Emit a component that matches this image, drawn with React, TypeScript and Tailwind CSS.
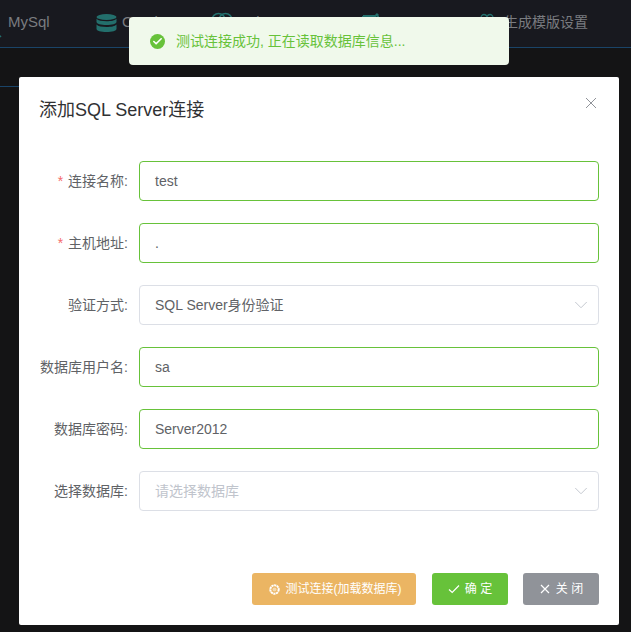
import { Check, ChevronDown } from 'lucide-react'

const FONT = "font-['Liberation_Sans','Noto_Sans_CJK_SC',sans-serif]"

const FIELDS = [
  { label: '连接名称:', value: 'test', required: true, ok: true },
  { label: '主机地址:', value: '.', required: true, ok: true },
  { label: '验证方式:', value: 'SQL Server身份验证', select: true },
  { label: '数据库用户名:', value: 'sa', ok: true },
  { label: '数据库密码:', value: 'Server2012', ok: true },
  { label: '选择数据库:', placeholder: '请选择数据库', select: true },
]

function Field({ label, value, placeholder, required, ok, select }: {
  label: string
  value?: string
  placeholder?: string
  required?: boolean
  ok?: boolean
  select?: boolean
}) {
  return (
    <div className="flex items-center">
      <label className="w-[109px] shrink-0 text-right text-sm text-[#606266]">
        {required && <span className="mr-[5px] text-[#f56c6c]">*</span>}
        {label}
      </label>
      <div
        className={`ml-[11px] flex h-10 w-[460px] items-center justify-between rounded border bg-white pl-[15px] pr-[6px] text-sm ${
          ok ? 'border-[#67c23a]' : 'border-[#dcdfe6]'
        }`}
      >
        <span className={value ? 'text-[#606266]' : 'text-[#c0c4cc]'}>{value ?? placeholder}</span>
        {select && <ChevronDown size={22} strokeWidth={1} className="text-[#c0c4cc]" />}
      </div>
    </div>
  )
}

function DbIcon() {
  return (
    <svg width="21" height="18" viewBox="0 0 21 18" fill="#236f6c" aria-hidden="true">
      <ellipse cx="10.500" cy="3" rx="10" ry="3" />
      <path d="M.5 4.800c1.500 1.800 5.500 2.500 10 2.500s8.500-.7 10-2.500V8c0 1.700-4.500 3-10 3S.5 9.700.5 8z" />
      <path d="M.5 10.500c1.500 1.800 5.500 2.500 10 2.500s8.500-.7 10-2.500V15c0 1.700-4.500 3-10 3S.5 16.700.5 15z" />
    </svg>
  )
}

function SearchIcon() {
  return (
    <svg width="14" height="14" viewBox="0 0 14 14" fill="none" stroke="#236f6c" strokeWidth="1.500" aria-hidden="true">
      <circle cx="6" cy="6" r="4.500" />
      <path d="M9.500 9.500L13 13" />
    </svg>
  )
}

function RingsIcon() {
  return (
    <svg width="22" height="18" viewBox="0 0 22 18" fill="none" stroke="#236f6c" strokeWidth="1.500" aria-hidden="true">
      <circle cx="7.500" cy="8" r="6.500" />
      <circle cx="14.500" cy="8" r="6.500" />
    </svg>
  )
}

function ScreenIcon() {
  return (
    <svg width="18" height="18" viewBox="0 0 18 18" fill="none" stroke="#236f6c" strokeWidth="2" aria-hidden="true">
      <path d="M1 4h13M1 4v11h15V4" />
      <path d="M14 4l2-2" strokeWidth="3" />
    </svg>
  )
}

function HeartIcon() {
  return (
    <svg width="14" height="16" viewBox="0 0 14 16" fill="none" stroke="#236f6c" strokeWidth="1.300" aria-hidden="true">
      <path d="M7 14C3 11 1 8.500 1 5c0-2 1.500-3.500 3-3.500S6.500 2.500 7 3.500C7.500 2.500 8.500 1.500 10 1.500S13 3 13 5c0 3.500-2 6-6 9z" />
    </svg>
  )
}

export default function App() {
  return (
    <div className={`relative h-[632px] overflow-hidden bg-[#141415] ${FONT}`}>
      {/* top nav, mostly covered by the toast and dialog */}
      <div className="flex h-12 items-center border-b border-[#1a4468] bg-[#18191f] pb-[3px] text-[#7a7c80]">
        <span className="-ml-[12px] mt-[18px]"><SearchIcon /></span>
        <span className="ml-[6px] w-[88px] text-[15px]">MySql</span>
        <span className="mt-[2px]"><DbIcon /></span>
        <span className="ml-[5px] w-[89px] text-[15px]">Oracle</span>
        <span className="-mt-[3px]"><RingsIcon /></span>
        <span className="ml-[5px] w-[124px] text-[15px]">SqlServer</span>
        <span className="-mt-[3px]"><ScreenIcon /></span>
        <span className="ml-2 w-[92px] text-[15px]">SSH</span>
        <span className="-mt-[3px]"><HeartIcon /></span>
        <span className="ml-[10px] text-sm">生成模版设置</span>
      </div>
      <div className="h-[39px] w-[19px] border-b border-[#1a4468]" />

      {/* toast */}
      <div className="absolute left-[129px] top-[17px] z-20 flex h-12 w-[380px] items-center rounded bg-[#f0f9eb] pl-[21px] text-sm text-[#67c23a]">
        <span className="flex h-[15px] w-[15px] items-center justify-center rounded-full bg-[#67c23a]">
          <Check size={11} strokeWidth={3.5} className="text-white" />
        </span>
        <span className="ml-[11px]">测试连接成功, 正在读取数据库信息...</span>
      </div>

      {/* dialog */}
      <div className="absolute left-[19px] top-[77px] z-10 flex h-[548px] w-[600px] flex-col rounded-[2px] bg-white">
        <div className="flex items-center justify-between pl-5 pr-[22px] pt-[19px]">
          <h2 className="text-lg leading-[28px] text-[#303133]">添加SQL Server连接</h2>
          <svg width="12" height="12" viewBox="0 0 12 12" fill="none" stroke="#909399" className="mt-[-14px]" aria-hidden="true">
            <path d="M1 1l10 10M11 1L1 11" />
          </svg>
        </div>
        <div className="mt-[37px] flex flex-col gap-[22px]">
          {FIELDS.map((f) => (
            <Field key={f.label} {...f} />
          ))}
        </div>
        <div className="mt-[62px] flex justify-end gap-[16px] pr-5 text-xs text-white">
          <button className="flex h-8 w-[164px] items-center justify-center gap-[6px] rounded-[3px] bg-[#ebb563] pl-[2px]">
            <svg width="11" height="11" viewBox="0 0 11 11" fill="none" stroke="white" aria-hidden="true">
              <circle cx="5.500" cy="5.500" r="4.200" strokeWidth="2" strokeDasharray="2.200 0.500" />
              <circle cx="5.500" cy="5.500" r="2" fill="#f5d9ae" stroke="none" />
            </svg>
            测试连接(加载数据库)
          </button>
          <button className="flex h-8 w-[76px] items-center justify-center gap-[5px] rounded-[3px] bg-[#67c23a]">
            <svg width="12" height="12" viewBox="0 0 12 12" fill="none" stroke="white" strokeWidth="1.200" aria-hidden="true">
              <path d="M1 6.500l3.200 3L11 2.500" />
            </svg>
            确 定
          </button>
          <button className="-ml-[1px] flex h-8 w-[76px] items-center justify-center gap-[5px] rounded-[3px] bg-[#909399]">
            <svg width="12" height="12" viewBox="0 0 12 12" fill="none" stroke="white" strokeWidth="1.200" aria-hidden="true">
              <path d="M2 2l8 8M10 2l-8 8" />
            </svg>
            关 闭
          </button>
        </div>
      </div>
    </div>
  )
}
